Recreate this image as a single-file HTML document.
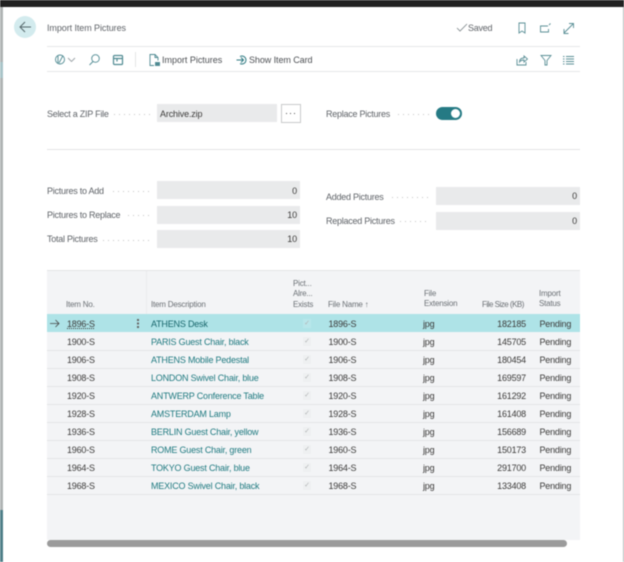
<!DOCTYPE html>
<html><head><meta charset="utf-8"><style>
html,body{margin:0;padding:0;background:#fff}
#p{position:relative;width:624px;height:562px;overflow:hidden;background:#fff;font-family:"Liberation Sans",sans-serif;font-size:9px;letter-spacing:-.15px;color:#3b3a39;filter:blur(.4px)}
#p div,#p span.a,#p svg{position:absolute}
.t{white-space:nowrap;line-height:12px;height:12px}
.l{color:#5f6368;letter-spacing:-.25px}
.h{color:#6b7075;font-size:8px;letter-spacing:-.2px;line-height:10.500px;white-space:nowrap}
.f{background:#e9eaeb;height:18px}
.d{height:1px;background:repeating-linear-gradient(to right,#c4c4c4 0 1px,transparent 1px 5px)}
.r{position:absolute;left:47px;width:533px;height:17px;border-bottom:1px solid #e3e4e6}
.r span{position:absolute;top:3px;line-height:12px;white-space:nowrap;letter-spacing:-.2px}
.n{left:20px;color:#3b3a39}.e{left:104px;color:#1f7a80}.x{left:281.500px}.g{left:376px}.s{right:54px}.u{left:492.500px}
.c{left:256px;top:3.500px!important;width:8px;height:9px;color:#b2b4b6;font-size:7px;line-height:9px!important;text-align:center;background:#eef0f1}
</style></head><body><div id="p">
<div style="left:0;top:0;width:624px;height:7px;background:#222"></div>
<div style="left:0;top:7px;width:3px;height:555px;background:#b0b4b4"></div>
<div style="left:0;top:62px;width:3px;height:16px;background:#a9c4c8"></div>
<div style="left:0;top:510px;width:3px;height:52px;background:#4f7f88"></div>
<div style="left:623px;top:7px;width:1px;height:555px;background:#b5b8b8"></div>

<div style="left:14px;top:16px;width:22px;height:22px;border-radius:50%;background:#d3ebee"></div>
<svg style="left:18px;top:20px" width="14" height="14" viewBox="0 0 14 14" fill="none" stroke="#55686c" stroke-width="1"><path d="M13 7H2M7 2L2 7l5 5"/></svg>
<div class="t l" style="left:47px;top:22px;letter-spacing:-.08px">Import Item Pictures</div>

<svg style="left:456px;top:23px" width="12" height="10" viewBox="0 0 12 10" fill="none" stroke="#7b8488" stroke-width=".8"><path d="M1 5l3 3 7-7"/></svg>
<div class="t l" style="left:468px;top:22px">Saved</div>
<svg style="left:517px;top:22px" width="10" height="12" viewBox="0 0 10 12" fill="none" stroke="#5a8f96" stroke-width=".9"><path d="M2 1h6v10L5 9l-3 2z"/></svg>
<svg style="left:539px;top:22px" width="13" height="12" viewBox="0 0 13 12" fill="none" stroke="#5a8f96" stroke-width=".9"><path d="M9 4H1.500v6h8V7M10 3l1.500-1.500"/></svg>
<svg style="left:562px;top:22px" width="13" height="13" viewBox="0 0 13 13" fill="none" stroke="#5a8f96" stroke-width=".9"><path d="M2 11l9-9M7 1.500h4.500V6M2 7v4.500h4.500"/></svg>

<div style="left:47px;top:46px;width:533px;height:1px;background:#e6e7e8"></div>
<div style="left:47px;top:71px;width:533px;height:1px;background:#e6e7e8"></div>

<svg style="left:54px;top:53px" width="24" height="13" viewBox="0 0 24 13" fill="none" stroke="#4f8a92" stroke-width=".9"><circle cx="6" cy="6.500" r="4.500"/><path d="M9 2.500L5 10M4 3v7"/><path d="M14 5l3.500 3.500L21 5" stroke="#9aa2a6"/></svg>
<svg style="left:88px;top:53px" width="13" height="13" viewBox="0 0 13 13" fill="none" stroke="#4f8a92" stroke-width=".9"><circle cx="7.500" cy="5.500" r="3.800"/><path d="M5 8.500L1.500 12"/></svg>
<svg style="left:112px;top:54px" width="12" height="12" viewBox="0 0 12 12" fill="none" stroke="#4f8a92" stroke-width="1.200"><rect x="1.500" y="1.500" width="9" height="9" rx="1"/><path d="M1.500 4.500h9M5 4.500v3"/></svg>
<div style="left:135px;top:52px;width:1px;height:15px;background:#e4e5e6"></div>
<svg style="left:148px;top:53px" width="13" height="14" viewBox="0 0 13 14" fill="none" stroke="#4f8a92" stroke-width=".9"><path d="M6 12.500H2V1.500h5l3 3v3M7 1.500v3h3"/><rect x="7.500" y="9.500" width="4" height="3" fill="#4f8a92"/></svg>
<div class="t" style="left:162px;top:54px;color:#4d5054;letter-spacing:-.02px">Import Pictures</div>
<svg style="left:236px;top:54px" width="12" height="12" viewBox="0 0 12 12" fill="none" stroke="#2f7a82" stroke-width="1"><path d="M0.500 6h7M5 3.500L7.500 6 5 8.500"/><path d="M4 2.500a4 4 0 1 1 0 7"/></svg>
<div class="t" style="left:249px;top:54px;color:#4d5054;letter-spacing:-.08px">Show Item Card</div>

<svg style="left:516px;top:54px" width="12" height="12" viewBox="0 0 12 12" fill="none" stroke="#5a8f96" stroke-width=".9"><path d="M1 5v6h9V8M3.500 8c0-3 2-4 4.500-4V2l3.500 3L8 8V6C6 6 4.500 6.500 3.500 8z"/></svg>
<svg style="left:540px;top:54px" width="12" height="12" viewBox="0 0 12 12" fill="none" stroke="#5a8f96" stroke-width=".9"><path d="M1 1.500h10L7 6.500V11H5V6.500z"/></svg>
<svg style="left:563px;top:55px" width="11" height="10" viewBox="0 0 11 10" fill="none" stroke="#5a8f96" stroke-width=".9"><path d="M0 1.500h1.500M0 4h1.500M0 6.500h1.500M0 9h1.500M3 1.500h8M3 4h8M3 6.500h8M3 9h8"/></svg>

<div class="t l" style="left:47px;top:107.500px">Select a ZIP File</div>
<div class="d" style="left:114px;top:114px;width:38px"></div>
<div class="f" style="left:157px;top:104px;width:120px"></div>
<div class="t" style="left:160px;top:107.500px">Archive.zip</div>
<div style="left:281px;top:104px;width:18px;height:17px;border:1px solid #c9cacb;background:#fff"></div>
<div style="left:286px;top:113px;width:1px;height:1px;background:#555;box-shadow:4px 0 #555,8px 0 #555"></div>
<div class="t l" style="left:326px;top:107.500px">Replace Pictures</div>
<div class="d" style="left:398px;top:114px;width:32px"></div>
<div style="left:436px;top:107px;width:26px;height:13px;border-radius:7px;background:#257a84"></div>
<div style="left:451px;top:109px;width:9px;height:9px;border-radius:50%;background:#fff"></div>

<div style="left:47px;top:149px;width:533px;height:1px;background:#e3e4e5"></div>

<div class="t l" style="left:47px;top:185px">Pictures to Add</div>
<div class="d" style="left:113px;top:191px;width:39px"></div>
<div class="f" style="left:157px;top:181px;width:143px"></div>
<div class="t" style="left:200px;width:97px;text-align:right;top:185px">0</div>
<div class="t l" style="left:47px;top:209px">Pictures to Replace</div>
<div class="d" style="left:128px;top:215px;width:24px"></div>
<div class="f" style="left:157px;top:206px;width:143px"></div>
<div class="t" style="left:200px;width:97px;text-align:right;top:209px">10</div>
<div class="t l" style="left:47px;top:233px">Total Pictures</div>
<div class="d" style="left:103px;top:240px;width:49px"></div>
<div class="f" style="left:157px;top:230px;width:143px"></div>
<div class="t" style="left:200px;width:97px;text-align:right;top:233px">10</div>

<div class="t l" style="left:326px;top:191px">Added Pictures</div>
<div class="d" style="left:392px;top:197px;width:38px"></div>
<div class="f" style="left:436px;top:187px;width:144px"></div>
<div class="t" style="left:480px;width:97px;text-align:right;top:190px">0</div>
<div class="t l" style="left:326px;top:215px">Replaced Pictures</div>
<div class="d" style="left:400px;top:221px;width:30px"></div>
<div class="f" style="left:436px;top:212px;width:144px"></div>
<div class="t" style="left:480px;width:97px;text-align:right;top:215px">0</div>

<div style="left:47px;top:270px;width:533px;height:270px;background:#f3f4f6"></div>
<div style="left:47px;top:270px;width:533px;height:1px;background:#e3e4e6"></div>
<div style="left:146px;top:271px;width:1px;height:43px;background:#ebecee"></div>
<div class="h" style="left:66px;top:299.500px">Item No.</div>
<div class="h" style="left:151px;top:299.500px">Item Description</div>
<div class="h" style="left:293px;top:278.500px">Pict...<br>Alre...<br>Exists</div>
<div class="h" style="left:328px;top:299.500px">File Name &#8593;</div>
<div class="h" style="left:424px;top:288.500px">File<br>Extension</div>
<div class="h" style="left:482px;top:299.500px;letter-spacing:-.5px">File Size (KB)</div>
<div class="h" style="left:539px;top:288.500px">Import<br>Status</div>

<div style="left:47px;top:314px;width:533px;height:18px;background:#aee3e7"></div>
<svg style="left:50px;top:319px" width="10" height="9" viewBox="0 0 10 9" fill="none" stroke="#444" stroke-width=".8"><path d="M0 4.500h9M5.500 1L9 4.500 5.500 8"/></svg>
<div style="left:137px;top:319px;width:1.500px;height:1.500px;background:#666;box-shadow:0 3.500px #666,0 7px #666"></div>

<div class="r" style="top:315px;border-bottom:0"><span class="n" style="text-decoration:underline dotted">1896-S</span><span class="e" style="color:#17666c">ATHENS Desk</span><span class="c" style="background:#b9e6ea">&#10003;</span><span class="x">1896-S</span><span class="g">jpg</span><span class="s">182185</span><span class="u">Pending</span></div>
<div class="r" style="top:333px"><span class="n">1900-S</span><span class="e">PARIS Guest Chair, black</span><span class="c">&#10003;</span><span class="x">1900-S</span><span class="g">jpg</span><span class="s">145705</span><span class="u">Pending</span></div>
<div class="r" style="top:351px"><span class="n">1906-S</span><span class="e">ATHENS Mobile Pedestal</span><span class="c">&#10003;</span><span class="x">1906-S</span><span class="g">jpg</span><span class="s">180454</span><span class="u">Pending</span></div>
<div class="r" style="top:369px"><span class="n">1908-S</span><span class="e">LONDON Swivel Chair, blue</span><span class="c">&#10003;</span><span class="x">1908-S</span><span class="g">jpg</span><span class="s">169597</span><span class="u">Pending</span></div>
<div class="r" style="top:387px"><span class="n">1920-S</span><span class="e">ANTWERP Conference Table</span><span class="c">&#10003;</span><span class="x">1920-S</span><span class="g">jpg</span><span class="s">161292</span><span class="u">Pending</span></div>
<div class="r" style="top:405px"><span class="n">1928-S</span><span class="e">AMSTERDAM Lamp</span><span class="c">&#10003;</span><span class="x">1928-S</span><span class="g">jpg</span><span class="s">161408</span><span class="u">Pending</span></div>
<div class="r" style="top:423px"><span class="n">1936-S</span><span class="e">BERLIN Guest Chair, yellow</span><span class="c">&#10003;</span><span class="x">1936-S</span><span class="g">jpg</span><span class="s">156689</span><span class="u">Pending</span></div>
<div class="r" style="top:441px"><span class="n">1960-S</span><span class="e">ROME Guest Chair, green</span><span class="c">&#10003;</span><span class="x">1960-S</span><span class="g">jpg</span><span class="s">150173</span><span class="u">Pending</span></div>
<div class="r" style="top:459px"><span class="n">1964-S</span><span class="e">TOKYO Guest Chair, blue</span><span class="c">&#10003;</span><span class="x">1964-S</span><span class="g">jpg</span><span class="s">291700</span><span class="u">Pending</span></div>
<div class="r" style="top:477px"><span class="n">1968-S</span><span class="e">MEXICO Swivel Chair, black</span><span class="c">&#10003;</span><span class="x">1968-S</span><span class="g">jpg</span><span class="s">133408</span><span class="u">Pending</span></div>

<div style="left:47px;top:539.500px;width:520px;height:7px;border-radius:3.500px;background:#9b9b9b"></div>
</div></body></html>
